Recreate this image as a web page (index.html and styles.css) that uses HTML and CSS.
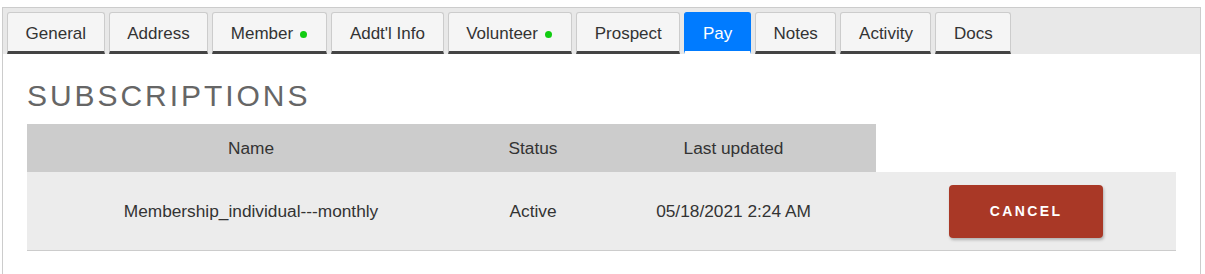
FILE: index.html
```html
<!DOCTYPE html>
<html>

<head>
    <title>Pay</title>
    <meta name="viewport" content="width=device-width, initial-scale=1.0">
    <link rel="stylesheet" href="styles.css">
</head>

<body>
    <div class="panel">
        <div class="tabs">
            <div class="tab">General</div>
            <div class="tab">Address</div>
            <div class="tab">Member <span class="dot"></span></div>
            <div class="tab">Addt'l Info</div>
            <div class="tab">Volunteer <span class="dot"></span></div>
            <div class="tab">Prospect</div>
            <div class="tab active">Pay</div>
            <div class="tab">Notes</div>
            <div class="tab">Activity</div>
            <div class="tab">Docs</div>
        </div>

        <div class="content">
            <h2>Subscriptions</h2>
            <table>
                <tr>
                    <th class="col-name">Name</th>
                    <th class="col-status">Status</th>
                    <th class="col-date">Last updated</th>
                    <th class="col-action blank"></th>
                </tr>
                <tr>
                    <td>Membership_individual---monthly</td>
                    <td>Active</td>
                    <td>05/18/2021 2:24 AM</td>
                    <td><button type="button" class="cancel">Cancel</button></td>
                </tr>
            </table>
        </div>
    </div>
</body>

</html>
```

FILE: styles.css
```css
body {
    font-family: Arial, "Liberation Sans", sans-serif;
    margin: 0;
    padding: 0;
    color: #333;
    background: #fff;
}

.panel {
    margin: 7px 4px 0 2px;
    border: 1px solid #ccc;
    border-bottom: none;
    height: 267px;
}

.tabs {
    display: flex;
    gap: 4px;
    background-color: #e8e8e8;
    padding: 4px 0 0 4px;
}

.tab {
    padding: 3px 17.6px 0 17.6px;
    height: 35px;
    font-size: 17px;
    color: #333;
    background-color: #f5f5f5;
    border: 1px solid #ccc;
    border-bottom: 3px solid #444;
    border-top-left-radius: 3px;
    border-top-right-radius: 3px;
    display: flex;
    align-items: center;
    gap: 7px;
}

.tab.active {
    background-color: #007bff;
    border-color: #007bff;
    border-bottom: 3px solid #fff;
    color: #fff;
}

.dot {
    width: 7px;
    height: 7px;
    border-radius: 50%;
    background-color: #1c1;
    display: inline-block;
    margin: 2px 1.5px 0 0;
}

.content {
    padding: 24px 24px 0 24px;
}

h2 {
    margin: 0 0 10px 0;
    font-size: 30px;
    line-height: 36px;
    font-weight: normal;
    letter-spacing: 2.95px;
    text-transform: uppercase;
    color: #666;
}

table {
    border-collapse: collapse;
    width: 1149px;
    font-size: 17.3px;
}

th {
    background-color: #ccc;
    font-weight: normal;
    height: 48px;
    padding: 0;
    text-align: center;
}

th.blank {
    background-color: #fff;
}

.col-name {
    width: 448px;
}

.col-status {
    width: 116px;
}

.col-date {
    width: 285px;
}

td {
    background-color: #ececec;
    border-bottom: 1px solid #ccc;
    height: 78px;
    padding: 0;
    text-align: center;
}

.cancel {
    background-color: #a93826;
    color: #fff;
    border: none;
    border-radius: 4px;
    width: 154px;
    height: 53px;
    font-family: Arial, "Liberation Sans", sans-serif;
    font-size: 14px;
    font-weight: bold;
    letter-spacing: 2.4px;
    text-transform: uppercase;
    box-shadow: 1px 2px 3px rgba(0, 0, 0, 0.25);
    cursor: pointer;
}
```
